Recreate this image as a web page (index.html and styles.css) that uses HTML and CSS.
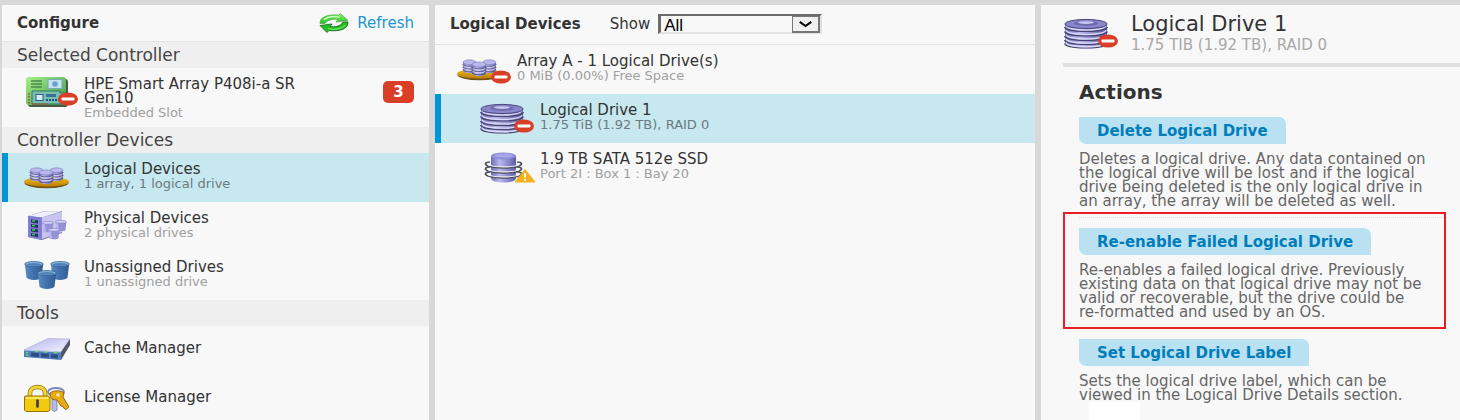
FILE: index.html
```html
<!DOCTYPE html>
<html lang="en">
<head>
    <meta charset="UTF-8">
    <meta name="viewport" content="width=device-width, initial-scale=1.0">
    <title>Smart Storage Administrator</title>
    <link rel="stylesheet" href="styles.css">
</head>
<body>
    <!-- shared icon parts -->
    <svg class="sprite" aria-hidden="true">
        <defs>
            <linearGradient id="lilac" x1="0" x2="1" y1="0" y2="0">
                <stop offset="0" stop-color="#6f6bb8"/>
                <stop offset="0.35" stop-color="#b9b8ee"/>
                <stop offset="1" stop-color="#5f5ba6"/>
            </linearGradient>
            <linearGradient id="gold" x1="0" x2="0" y1="0" y2="1">
                <stop offset="0" stop-color="#f3c21c"/>
                <stop offset="1" stop-color="#b97a06"/>
            </linearGradient>
            <linearGradient id="board" x1="0" x2="1" y1="0" y2="1">
                <stop offset="0" stop-color="#a9f08c"/>
                <stop offset="1" stop-color="#3c9440"/>
            </linearGradient>
            <linearGradient id="bucket" x1="0" x2="1" y1="0" y2="0">
                <stop offset="0" stop-color="#5d8cc6"/>
                <stop offset="0.4" stop-color="#4274b0"/>
                <stop offset="1" stop-color="#325c92"/>
            </linearGradient>
            <linearGradient id="lid" x1="0" x2="1" y1="0" y2="1">
                <stop offset="0" stop-color="#b5b2ec"/>
                <stop offset="1" stop-color="#f4f4ff"/>
            </linearGradient>
            <linearGradient id="leaf" x1="0" x2="0" y1="0" y2="1">
                <stop offset="0" stop-color="#8dee74"/>
                <stop offset="1" stop-color="#1fc41f"/>
            </linearGradient>
        </defs>
        <symbol id="failed" viewBox="0 0 20 14">
            <ellipse cx="10" cy="7" rx="10" ry="6.6" fill="#d93f27"/>
            <rect x="3.5" y="5.5" width="13" height="3" rx="1" fill="#fff"/>
        </symbol>
        <symbol id="stack" viewBox="0 0 14 14">
            <path d="M1 3v7.500c0 3.600 12 3.600 12 0V3z" fill="url(#lilac)"/>
            <path d="M0.500 5c1 2.600 12 2.600 13 0M0.500 7.500c1 2.600 12 2.600 13 0M1 10c1 2.600 11 2.600 12 0" fill="none" stroke="#5a5885" stroke-width="0.900"/>
            <path d="M1.500 6.200c1 2.200 10 2.200 11 0M1.500 8.700c1 2.200 10 2.200 11 0" fill="none" stroke="#e0e0f8" stroke-width="0.800"/>
            <ellipse cx="7" cy="3" rx="6" ry="2.200" fill="#b9b7ee" stroke="#8381c4" stroke-width="0.600"/>
        </symbol>
        <symbol id="array" viewBox="0 0 46 32">
            <ellipse cx="22.500" cy="22" rx="22" ry="5.200" fill="#6f5314"/>
            <ellipse cx="22.500" cy="20.800" rx="22.500" ry="5" fill="url(#gold)"/>
            <use href="#stack" x="5" y="6" width="15" height="15"/>
            <use href="#stack" x="25" y="6" width="15" height="15"/>
            <use href="#stack" x="14" y="8" width="16" height="16"/>
        </symbol>
        <symbol id="drive" viewBox="0 0 46 32">
            <path d="M2 7v19c0 7 42 7 42 0V7z" fill="url(#lilac)"/>
            <path d="M1.500 10c1 6 42 6 43 0M1.500 14.500c1 6 42 6 43 0M1.500 19c1 6 42 6 43 0M1.500 23c1 6 42 6 43 0M1.500 26.500c1 6 42 6 43 0" fill="none" stroke="#45436f" stroke-width="1.100"/>
            <path d="M3 8.500c1 6 39 6 40 0M3 13c1 6 39 6 40 0M3 17.500c1 6 39 6 40 0M3 21.700c1 6 39 6 40 0M3 25.300c1 6 39 6 40 0" fill="none" stroke="#dddcf8" stroke-width="1.200"/>
            <ellipse cx="23" cy="7" rx="21" ry="4.600" fill="#8985cb" stroke="#4b497c"/>
            <ellipse cx="23" cy="6.300" rx="12" ry="2.400" fill="#6c69ae"/>
            <ellipse cx="23" cy="5.600" rx="8" ry="1.400" fill="#c9c8f2"/>
        </symbol>
        <symbol id="pail" viewBox="0 0 20 20">
            <path d="M0.800 3l1.700 13.500c1.500 3.200 13.500 3.200 15 0L19.200 3z" fill="url(#bucket)"/>
            <ellipse cx="10" cy="3" rx="9.300" ry="2.500" fill="#88b2dc" stroke="#2f5788" stroke-width="0.700"/>
            <ellipse cx="10" cy="3.400" rx="7.200" ry="1.400" fill="#4f80b8"/>
        </symbol>
        <symbol id="pail-small" viewBox="0 0 20 20">
            <path d="M1 3l1.500 13.500c1.500 3.200 13.500 3.200 15 0L19 3z" fill="#9391d8"/>
            <path d="M1 3l1.500 13.500c0.600 1.200 2 1.800 4 2L5 4z" fill="#b9b8ef"/>
            <ellipse cx="10" cy="3" rx="9" ry="2.500" fill="#d3d2f6" stroke="#7472b8" stroke-width="0.900"/>
        </symbol>
    </svg>

    <div class="console">
        <nav class="panel configure">
            <div class="panel-header">
                <h1>Configure</h1>
                <a class="refresh" href="#refresh">
                    <svg width="30" height="20" viewBox="0 0 30 20" aria-hidden="true">
                        <path d="M1 10.500C0.500 4.500 8 1 19.500 2L21.500 0.500 29 7.500 17 9l2-2.500C14 5.500 8 7 6 10.500z" fill="url(#leaf)" stroke="#3f9a38" stroke-width="0.600"/>
                        <path d="M29 9C29.500 15 22 19 10 17.500L8 19.500 1 12.500 13 11l-2 2.500C16 14.500 22 13 24 9z" fill="#22c022" stroke="#1b5c18" stroke-width="0.800"/>
                        <path d="M5 6.500C9 3.600 16 3.400 20.500 4.200" fill="none" stroke="#d5ffc6" stroke-width="1.400"/>
                        <path d="M9 15.500C15 17.300 23 16 26 12" fill="none" stroke="#6fe866" stroke-width="1.200"/>
                    </svg>
                    Refresh
                </a>
            </div>

            <h2>Selected Controller</h2>
            <a class="item tall" href="#controller">
                <svg class="icon" viewBox="0 0 60 32" aria-hidden="true">
                    <rect x="4" y="3" width="40" height="28" rx="3" fill="#4a5a4a"/>
                    <rect x="2" y="1" width="40" height="28" rx="3" fill="url(#board)"/>
                    <path d="M7 5h11M7 8h11M7 11h11" stroke="#4c8a49" stroke-width="1.600"/>
                    <rect x="24" y="3.500" width="14" height="9" fill="#c4e3ee" stroke="#76a9bd"/>
                    <circle cx="31" cy="8" r="2.800" fill="#6b9fc8"/>
                    <path d="M8 15h28v2h6v11H8z" fill="#79bfae" stroke="#2f7a63"/>
                    <rect x="12" y="18.500" width="7" height="6" fill="#d8ecf4" stroke="#2b5b8c"/>
                    <rect x="22" y="18" width="10" height="3" fill="#38719f"/>
                    <path d="M22 24h14" stroke="#24527e" stroke-width="2" stroke-dasharray="2 1"/>
                    <path d="M5 17v11M8 28h16" stroke="#c23a2a" stroke-width="1.400" stroke-dasharray="1.500 1.500"/>
                    <use href="#failed" x="34" y="16" width="20" height="14"/>
                </svg>
                <span class="text">
                    <span class="name">HPE Smart Array P408i-a SR Gen10</span>
                    <span class="detail">Embedded Slot</span>
                </span>
                <span class="count">3</span>
            </a>

            <h2>Controller Devices</h2>
            <a class="item selected" href="#logical">
                <svg class="icon" viewBox="0 0 60 32" aria-hidden="true">
                    <use href="#array" x="0" y="0" width="46" height="32"/>
                </svg>
                <span class="text">
                    <span class="name">Logical Devices</span>
                    <span class="detail">1 array, 1 logical drive</span>
                </span>
            </a>
            <a class="item" href="#physical">
                <svg class="icon" viewBox="0 0 60 32" aria-hidden="true">
                    <path d="M4 6L19 1.500 38 1v22L18 30 4 27z" fill="#77769c"/>
                    <path d="M4 6L20 1.500 38 1 18 7.500z" fill="#f0effd"/>
                    <path d="M18 7.500L38 1.500V22L18 29z" fill="#c7c5f0"/>
                    <path d="M4 6l14 1.500V30L4 27z" fill="#807ed2"/>
                    <path d="M7 9.500l7 1v3l-7-1zM7 14l7 1v3l-7-1zM7 18.500l7 1v3l-7-1zM7 23l7 1v3l-7-1z" fill="#23305c"/>
                    <path d="M8 11h3M8 15.500h3M8 20h3M8 24.500h3" stroke="#35d84c" stroke-width="1.600"/>
                    <use href="#pail-small" x="18" y="11" width="12" height="12"/>
                    <use href="#pail-small" x="31" y="10" width="12" height="12"/>
                    <use href="#pail-small" x="24" y="18" width="12" height="12"/>
                </svg>
                <span class="text">
                    <span class="name">Physical Devices</span>
                    <span class="detail">2 physical drives</span>
                </span>
            </a>
            <a class="item" href="#unassigned">
                <svg class="icon" viewBox="0 0 60 32" aria-hidden="true">
                    <use href="#pail" x="0" y="2" width="20" height="20"/>
                    <use href="#pail" x="26" y="2" width="20" height="20"/>
                    <use href="#pail" x="13" y="11" width="20" height="20"/>
                </svg>
                <span class="text">
                    <span class="name">Unassigned Drives</span>
                    <span class="detail">1 unassigned drive</span>
                </span>
            </a>

            <h2>Tools</h2>
            <a class="item single" href="#cache">
                <svg class="icon" viewBox="0 0 60 32" aria-hidden="true">
                    <path d="M0 18L24 6.500 46 7 37 20z" fill="url(#lid)" stroke="#a5a3d4" stroke-width="0.600"/>
                    <path d="M37 20l9-13v6l-9 15z" fill="#53536c"/>
                    <path d="M0 18l37 2v8L0 25z" fill="#4f7fbc"/>
                    <path d="M0 18l37 2" stroke="#b9c9ee"/>
                    <path d="M7 20.500l8 0.600v4l-8-0.600zM17 21.200l8 0.500v4l-8-0.500zM27 22l7 0.400v4l-7-0.400z" fill="#2c4f86"/>
                    <path d="M2 20.500h2M2 23h2M11 19.500h3M20 20h3M30 20.500h3" stroke="#6ddd5e" stroke-width="1.300"/>
                </svg>
                <span class="text"><span class="name">Cache Manager</span></span>
            </a>
            <a class="item single" href="#license">
                <svg class="icon" viewBox="0 0 60 32" aria-hidden="true">
                    <ellipse cx="32" cy="11" rx="8" ry="4" fill="none" stroke="#7d86bd" stroke-width="1.800"/>
                    <path d="M28 15h5v14l-2.500 1.500L28 29z" fill="#b7bce0" stroke="#6a70a0" stroke-width="0.700"/>
                    <path d="M26 12c4-3 11-3 14 0l-1 4 6 10-3 2.500-2-1-1-2-2-0.500-4-6c-4 0-7-1-7-7z" fill="#e8ab13" stroke="#86600a" stroke-width="0.900"/>
                    <circle cx="34" cy="14" r="1.800" fill="#fbe9a8"/>
                    <path d="M6 16v-4c0-8 15-8 15 0v4" fill="none" stroke="#9a7a00" stroke-width="4.600"/>
                    <path d="M6 16v-4c0-8 15-8 15 0v4" fill="none" stroke="#f4d53a" stroke-width="3"/>
                    <path d="M1 15h23l2 1.500V29l-2 1.500H2L0.500 29V16z" fill="#f2cb0e" stroke="#957200"/>
                    <path d="M2 17h22" stroke="#fdf08a" stroke-width="1.400"/>
                    <path d="M13.500 19.500v6" stroke="#3b3558" stroke-width="2.600" stroke-linecap="round"/>
                </svg>
                <span class="text"><span class="name">License Manager</span></span>
            </a>
        </nav>

        <main class="panel devices">
            <div class="panel-header">
                <h1>Logical Devices</h1>
                <label for="show">Show</label>
                <span class="select-box">
                    <select id="show">
                        <option>All</option>
                        <option>Arrays</option>
                        <option>Logical Drives</option>
                    </select>
                    <svg class="arrow" viewBox="0 0 28 17" aria-hidden="true">
                        <path d="M7 6l7 5 7-5" fill="none" stroke="#000" stroke-width="2.500"/>
                    </svg>
                </span>
            </div>

            <a class="item" href="#array-a">
                <svg class="icon" viewBox="0 0 60 32" aria-hidden="true">
                    <use href="#array" x="0" y="0" width="46" height="32"/>
                    <use href="#failed" x="34" y="17" width="20" height="14"/>
                </svg>
                <span class="text">
                    <span class="name">Array A - 1 Logical Drive(s)</span>
                    <span class="detail">0 MiB (0.00%) Free Space</span>
                </span>
            </a>
            <a class="item child selected" href="#drive-1">
                <svg class="icon" viewBox="0 0 60 32" aria-hidden="true">
                    <use href="#drive" x="-1" y="0" width="46" height="32"/>
                    <use href="#failed" x="34" y="17" width="20" height="14"/>
                </svg>
                <span class="text">
                    <span class="name">Logical Drive 1</span>
                    <span class="detail">1.75 TiB (1.92 TB), RAID 0</span>
                </span>
            </a>
            <a class="item child" href="#ssd">
                <svg class="icon" viewBox="0 0 60 32" aria-hidden="true">
                    <path d="M11 5v22c0 6 25 6 25 0V5z" fill="url(#lilac)"/>
                    <ellipse cx="23.500" cy="5" rx="12.500" ry="3.500" fill="#8f8dd8"/>
                    <ellipse cx="23.500" cy="4.600" rx="9.500" ry="2" fill="#a9a7ea"/>
                    <path d="M10 11c-5 0-6 2.500-2 4 8 2.500 23 2.500 31 0 4-1.500 3-4-2-4M10 16c-5 0-6 2.500-2 4 8 2.500 23 2.500 31 0 4-1.500 3-4-2-4M10 21c-5 0-6 2.500-2 4 8 2.500 23 2.500 31 0 4-1.500 3-4-2-4" fill="none" stroke="#50505c" stroke-width="1.700"/>
                    <path d="M8 14c8 2.500 23 2.500 31 0M8 19c8 2.500 23 2.500 31 0M8 24c8 2.500 23 2.500 31 0" fill="none" stroke="#ececf4" stroke-width="1.100"/>
                    <path d="M45 18.500L55 31H35z" fill="#f5b01a" stroke="#f5b01a" stroke-linejoin="round"/>
                    <path d="M45 22v4.500M45 28v1.800" stroke="#fff" stroke-width="2"/>
                </svg>
                <span class="text">
                    <span class="name">1.9 TB SATA 512e SSD</span>
                    <span class="detail">Port 2I : Box 1 : Bay 20</span>
                </span>
            </a>
        </main>

        <aside class="panel details">
            <div class="details-header">
                <svg class="icon" viewBox="0 0 60 32" aria-hidden="true">
                    <use href="#drive" x="0" y="0" width="46" height="32"/>
                    <use href="#failed" x="35" y="17" width="20" height="14"/>
                </svg>
                <div>
                    <h1>Logical Drive 1</h1>
                    <p>1.75 TIB (1.92 TB), RAID 0</p>
                </div>
            </div>

            <div class="actions">
                <h2>Actions</h2>
                <section class="action">
                    <button type="button">Delete Logical Drive</button>
                    <p>Deletes a logical drive. Any data contained on the logical drive will be lost and if the logical drive being deleted is the only logical drive in an array, the array will be deleted as well.</p>
                </section>
                <section class="action highlighted">
                    <button type="button">Re-enable Failed Logical Drive</button>
                    <p>Re-enables a failed logical drive. Previously existing data on that logical drive may not be valid or recoverable, but the drive could be <span class="nowrap">re-formatted</span> and used by an OS.</p>
                </section>
                <section class="action">
                    <button type="button">Set Logical Drive Label</button>
                    <p>Sets the logical drive label, which can be viewed in the Logical Drive Details section.</p>
                </section>
                <div class="blank"></div>
            </div>
        </aside>
    </div>
</body>
</html>
```
FILE: styles.css
```css
* {
    margin: 0;
    padding: 0;
    box-sizing: border-box;
}

body {
    background: #d8d8d8;
    color: #333;
    font-family: "DejaVu Sans", Verdana, sans-serif;
    font-size: 15px;
    overflow: hidden;
}

a {
    color: inherit;
    text-decoration: none;
}

.sprite {
    position: absolute;
    width: 0;
    height: 0;
}

.nowrap {
    white-space: nowrap;
}

.console {
    display: grid;
    grid-template-columns: 427fr 600fr 419fr;
    gap: 6px;
    height: 100vh;
    padding: 5px 0 0 2px;
}

.panel {
    background: #f8f8f8;
    min-width: 0;
    overflow: hidden;
}

.panel-header {
    display: flex;
    align-items: center;
    height: 37px;
    padding: 0 15px;
    border-bottom: 1px solid #e2e2e2;
}

.panel-header h1 {
    font-size: 15px;
    font-weight: bold;
}

.devices .panel-header {
    height: 40px;
    padding-bottom: 2px;
}

.refresh {
    display: flex;
    align-items: center;
    gap: 8px;
    margin-left: auto;
    color: #1e96d2;
}

.configure h2 {
    padding-left: 15px;
    background: #efefef;
    font-size: 17px;
    font-weight: normal;
    line-height: 26px;
    color: #444;
}

/* list rows */
.item {
    display: flex;
    align-items: flex-start;
    height: 49px;
    padding: 8px 15px 0 16px;
    border-left: 6px solid transparent;
}

.item.tall {
    height: 59px;
}

.item.child {
    padding-left: 39px;
}

.item.selected {
    background: #c7e8ef;
    border-left-color: #0096d6;
}

.icon {
    flex: none;
    width: 60px;
    height: 32px;
}

.text {
    flex: 1;
    padding-top: 1px;
}

.tall .text {
    padding-right: 50px;
}

.name {
    display: block;
    font-size: 15px;
    line-height: 14px;
}

.detail {
    display: block;
    font-size: 13px;
    line-height: 16px;
    color: #a0a0a0;
}

.selected .detail {
    color: #6a7a7e;
}

.item.single {
    padding-top: 6px;
}

.single .text {
    padding-top: 9px;
}

.count {
    margin-top: 5px;
    width: 31px;
    border-radius: 5px;
    background: #d93f27;
    color: #fff;
    font-weight: bold;
    line-height: 22px;
    text-align: center;
}

/* filter */
.panel-header label {
    margin-left: 29px;
    margin-right: 8px;
}

.select-box {
    position: relative;
    width: 164px;
}

.select-box select {
    display: block;
    width: 100%;
    height: 20px;
    padding-left: 3px;
    appearance: none;
    background: #f8f8f8;
    border: 2px solid;
    border-color: #6b6b6b #e2e2e2 #e2e2e2 #6b6b6b;
    border-left-width: 3px;
    border-radius: 0;
    color: #000;
    font-family: "Liberation Sans", Arial, sans-serif;
    font-size: 17px;
}

.arrow {
    position: absolute;
    top: 2px;
    right: 2px;
    width: 28px;
    height: 17px;
    background: #f0f0f0;
    border: 1px solid #777;
    border-width: 1px 2px 2px 1px;
    pointer-events: none;
}

/* details */
.details {
    padding-left: 22px;
}

.details-header {
    display: flex;
    height: 62px;
    padding-top: 7px;
    border-bottom: 4px solid #e0e0e0;
}

.details-header .icon {
    margin: 5px 8px 0 0;
}

.details-header h1 {
    font-size: 21px;
    font-weight: normal;
    line-height: 24px;
}

.details-header p {
    font-size: 15px;
    line-height: 18px;
    color: #a8a8a8;
}

.actions {
    padding: 14px 16px 0 16px;
}

.actions h2 {
    font-size: 20px;
    line-height: 22px;
    margin-bottom: 14px;
}

.action {
    position: relative;
    padding-bottom: 9px;
    margin-bottom: 10px;
    border-bottom: 1px dotted #ddd;
}

.action button {
    display: block;
    height: 27px;
    padding: 0 18px;
    border: 0;
    border-radius: 0 7px 0 7px;
    background: #b9e1f1;
    color: #007dba;
    font-family: inherit;
    font-size: 15px;
    font-weight: bold;
}

.action p {
    margin-top: 8px;
    font-size: 15px;
    line-height: 14px;
    color: #666;
}

.action.highlighted::after {
    content: "";
    position: absolute;
    top: -16px;
    right: -2px;
    bottom: -1px;
    left: -16px;
    border: 2px solid #ed1c24;
    pointer-events: none;
}

.action:last-of-type {
    margin-bottom: 0;
    padding-bottom: 0;
    border-bottom: 0;
}

.blank {
    width: 51px;
    height: 20px;
    margin-left: 10px;
    background: #fff;
}
```
